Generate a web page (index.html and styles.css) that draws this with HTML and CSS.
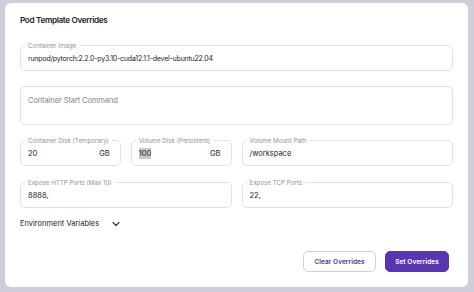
FILE: index.html
```html
<!DOCTYPE html>
<html>
  <head>
    <meta charset="UTF-8" />
    <title>Pod Template Overrides</title>
    <link rel="stylesheet" href="styles.css">
  </head>
  <body>
    <!-- 背景（ぼかされたページ） -->
    <div class="backdrop">
      <!-- モーダル本体 -->
      <div class="modal">
        <h2 class="modal-title">Pod Template Overrides</h2>

        <fieldset class="field">
          <legend>Container Image</legend>
          <div class="field-value image-value">runpod/pytorch:2.2.0-py3.10-cuda12.1.1-devel-ubuntu22.04</div>
        </fieldset>

        <div class="field field-tall">
          <div class="field-placeholder">Container Start Command</div>
        </div>

        <div class="row">
          <div class="row-half">
            <fieldset class="field">
              <legend>Container Disk (Temporary)</legend>
              <div class="field-value field-split"><span>20</span><span>GB</span></div>
            </fieldset>
            <fieldset class="field">
              <legend>Volume Disk (Persistent)</legend>
              <div class="field-value field-split"><span class="selected">100</span><span>GB</span></div>
            </fieldset>
          </div>
          <fieldset class="field">
            <legend>Volume Mount Path</legend>
            <div class="field-value">/workspace</div>
          </fieldset>
        </div>

        <div class="row row-ports">
          <fieldset class="field">
            <legend>Expose HTTP Ports (Max 10)</legend>
            <div class="field-value">8888,</div>
          </fieldset>
          <fieldset class="field">
            <legend>Expose TCP Ports</legend>
            <div class="field-value">22,</div>
          </fieldset>
        </div>

        <div class="env-toggle">
          <span>Environment Variables</span>
          <svg class="chevron" width="8" height="6" viewBox="0 0 8 6">
            <path d="M1 1.5 L4 4.5 L7 1.5" fill="none" stroke="#3a3a44" stroke-width="1.2" stroke-linecap="round" stroke-linejoin="round"/>
          </svg>
        </div>

        <!-- ボタン -->
        <div class="modal-actions">
          <button class="btn btn-outline">Clear Overrides</button>
          <button class="btn btn-primary">Set Overrides</button>
        </div>
      </div>
    </div>
  </body>
</html>
```

FILE: styles.css
```css
/* ページ全体 */
html,
body {
  margin: 0;
  padding: 0;
}

body {
  font-family: Inter, "Liberation Sans", sans-serif;
  color: #222228;
}

/* モーダル後ろの暗い背景 */
.backdrop {
  width: 474px;
  height: 292px;
  background-color: #cfcdd9;
  padding: 3px 6px 5px 5px;
  box-sizing: border-box;
}

/* モーダル本体 */
.modal {
  background-color: #fff;
  border-radius: 6px;
  height: 284px;
  padding: 0 15px;
  box-sizing: border-box;
  display: flex;
  flex-direction: column;
}

.modal-title {
  font-size: 8.2px;
  font-weight: 600;
  letter-spacing: -0.35px;
  margin: 11px 0 0;
  line-height: 12px;
}

/* 入力欄（枠線つき） */
.field {
  margin: 0;
  padding: 0 7px;
  border: 1px solid #e0e0e6;
  border-radius: 5px;
  height: 29px;
  box-sizing: border-box;
  min-width: 0;
}

.field legend {
  font-size: 6.2px;
  color: #8f8f98;
  padding: 0 3px;
  margin-left: -3px;
  line-height: 7px;
  white-space: nowrap;
}

fieldset.field {
  margin-top: -3px;
}

.modal > fieldset.field {
  margin-top: 16px;
}

.field-value {
  font-size: 7.5px;
  line-height: 11px;
  margin-top: 4px;
  white-space: nowrap;
}

/* 長いイメージ名は少し詰める */
.image-value {
  font-size: 7px;
  letter-spacing: -0.2px;
}

.field-split {
  display: flex;
  justify-content: space-between;
  padding-right: 3px;
}

.selected {
  background-color: #c9c9d0;
}

.field-tall {
  height: 39px;
  margin-top: 15px;
  padding-top: 9px;
}

.field-placeholder {
  font-size: 7.5px;
  letter-spacing: -0.1px;
  line-height: 10px;
  color: #80808a;
}

/* 横並びの行 */
.row {
  display: grid;
  grid-template-columns: 1fr 1fr;
  gap: 10px;
  margin-top: 15px;
}

.row-half {
  display: grid;
  grid-template-columns: 1fr 1fr;
  gap: 10px;
}

.row-ports {
  margin-top: 16px;
}

/* 環境変数の開閉 */
.env-toggle {
  display: flex;
  align-items: center;
  gap: 13px;
  font-size: 7.5px;
  margin-top: 10px;
  line-height: 12px;
}

/* ボタン */
.modal-actions {
  display: flex;
  justify-content: flex-end;
  gap: 9px;
  margin-top: 21px;
  padding-right: 4px;
}

.btn {
  font-family: Inter, "Liberation Sans", sans-serif;
  font-size: 6.6px;
  font-weight: 600;
  height: 21px;
  border-radius: 5px;
  padding: 0;
  white-space: nowrap;
  cursor: pointer;
}

.btn-outline {
  background-color: #fff;
  border: 1px solid #cfd0dc;
  color: #4b3a8f;
  width: 73px;
}

.btn-primary {
  background-color: #5a35b1;
  border: 1px solid #5a35b1;
  color: #fff;
  width: 64px;
}
```
